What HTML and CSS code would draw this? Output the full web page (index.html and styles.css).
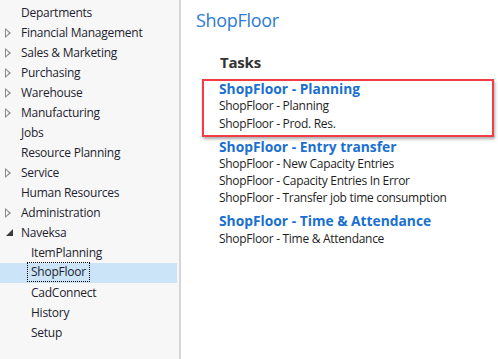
FILE: index.html
```html
<!DOCTYPE html>
<html>
<head>
<meta charset="utf-8">
<link rel="stylesheet" href="styles.css">
</head>
<body>
<div class="app">
  <nav class="sidebar">
    <ul class="tree">
      <li class="node"><span class="tw"></span><span class="lbl">Departments</span></li>
      <li class="node"><span class="tw closed"></span><span class="lbl">Financial Management</span></li>
      <li class="node"><span class="tw closed"></span><span class="lbl">Sales &amp; Marketing</span></li>
      <li class="node"><span class="tw closed"></span><span class="lbl">Purchasing</span></li>
      <li class="node"><span class="tw closed"></span><span class="lbl">Warehouse</span></li>
      <li class="node"><span class="tw closed"></span><span class="lbl">Manufacturing</span></li>
      <li class="node"><span class="tw"></span><span class="lbl">Jobs</span></li>
      <li class="node"><span class="tw"></span><span class="lbl">Resource Planning</span></li>
      <li class="node"><span class="tw closed"></span><span class="lbl">Service</span></li>
      <li class="node"><span class="tw"></span><span class="lbl">Human Resources</span></li>
      <li class="node"><span class="tw closed"></span><span class="lbl">Administration</span></li>
      <li class="node"><span class="tw open"></span><span class="lbl">Naveksa</span></li>
      <li class="node sub"><span class="lbl">ItemPlanning</span></li>
      <li class="node sub selected"><span class="lbl focus">ShopFloor</span></li>
      <li class="node sub"><span class="lbl">CadConnect</span></li>
      <li class="node sub"><span class="lbl">History</span></li>
      <li class="node sub"><span class="lbl">Setup</span></li>
    </ul>
  </nav>
  <main class="content">
    <h1 class="title">ShopFloor</h1>
    <section class="tasks">
      <h2 class="tasks-head">Tasks</h2>
      <div class="group highlight">
        <h3 class="group-head">ShopFloor - Planning</h3>
        <div class="item tall">ShopFloor - Planning</div>
        <div class="item tall">ShopFloor - Prod. Res.</div>
      </div>
      <div class="group">
        <h3 class="group-head">ShopFloor - Entry transfer</h3>
        <div class="item">ShopFloor - New Capacity Entries</div>
        <div class="item">ShopFloor - Capacity Entries In Error</div>
        <div class="item">ShopFloor - Transfer job time consumption</div>
      </div>
      <div class="group last">
        <h3 class="group-head">ShopFloor - Time &amp; Attendance</h3>
        <div class="item">ShopFloor - Time &amp; Attendance</div>
      </div>
    </section>
  </main>
</div>
</body>
</html>
```
FILE: styles.css
```css
* { box-sizing: border-box; }
html, body { margin: 0; padding: 0; }
body {
  width: 498px;
  height: 359px;
  overflow: hidden;
  background: #ffffff;
  font-family: "Open Sans", "Noto Sans", sans-serif;
  font-size: 12px;
  color: #1e1e1e;
}
.app {
  display: flex;
  height: 359px;
}
.sidebar {
  width: 181px;
  flex: none;
  background: #f7f7f7;
  border-right: 2px solid #d6d6d6;
  padding-right: 2px;
}
.tree {
  list-style: none;
  margin: 0;
  padding: 3px 0 0 0;
}
.node {
  height: 20px;
  display: flex;
  align-items: center;
  padding-left: 4px;
  padding-bottom: 2px;
  color: #1e1e30;
  letter-spacing: -0.25px;
  white-space: nowrap;
}
.tw {
  width: 17px;
  flex: none;
  height: 18px;
  position: relative;
}
.tw.closed::before {
  content: "";
  position: absolute;
  left: 1px;
  top: 5px;
  width: 0;
  height: 0;
  border-top: 5px solid transparent;
  border-bottom: 5px solid transparent;
  border-left: 6px solid #8a8a8a;
}
.tw.closed::after {
  content: "";
  position: absolute;
  left: 2px;
  top: 7px;
  width: 0;
  height: 0;
  border-top: 3px solid transparent;
  border-bottom: 3px solid transparent;
  border-left: 3.6px solid #f7f7f7;
}
.tw.open::before {
  content: "";
  position: absolute;
  left: 2px;
  top: 6px;
  width: 0;
  height: 0;
  border-left: 7px solid transparent;
  border-bottom: 7px solid #3a3a3a;
}
.node.sub {
  padding-left: 31px;
}
.node.selected {
  background: #cce4f7;
}
.lbl.focus {
  outline: 1px dotted #000;
  outline-offset: 0;
  padding: 0 3px 1px 3px;
  margin-left: -3px;
  line-height: 17px;
}
.content {
  flex: 1;
  padding: 8px 0 0 15px;
}
.title {
  margin: 0;
  font-weight: 400;
  font-size: 18px;
  line-height: 24px;
  color: #2b7cd3;
  letter-spacing: -0.3px;
}
.tasks {
  padding: 0 4px 0 6px;
  margin-top: 20px;
}
.tasks-head {
  margin: 0 0 7px 18px;
  font-size: 15px;
  line-height: 20px;
  font-weight: 700;
  color: #333333;
  letter-spacing: -0.2px;
}
.group {
  padding: 0 0 0 17px;
}
.group.highlight {
  border: 2px solid #f23d47;
  box-shadow: 1px 2px 3px rgba(0,0,0,0.35);
  padding: 0 0 3px 15px;
  margin-bottom: 2px;
}
.group-head {
  margin: 0;
  font-size: 13.8px;
  line-height: 16px;
  font-weight: 700;
  color: #1a6fd0;
  letter-spacing: 0px;
}
.group.last {
  margin-top: 6px;
}
.group.last .group-head {
  line-height: 18px;
}
.item {
  font-size: 12px;
  line-height: 17px;
  color: #1e1e1e;
  letter-spacing: -0.3px;
}
.item.tall {
  line-height: 17.5px;
}
```
